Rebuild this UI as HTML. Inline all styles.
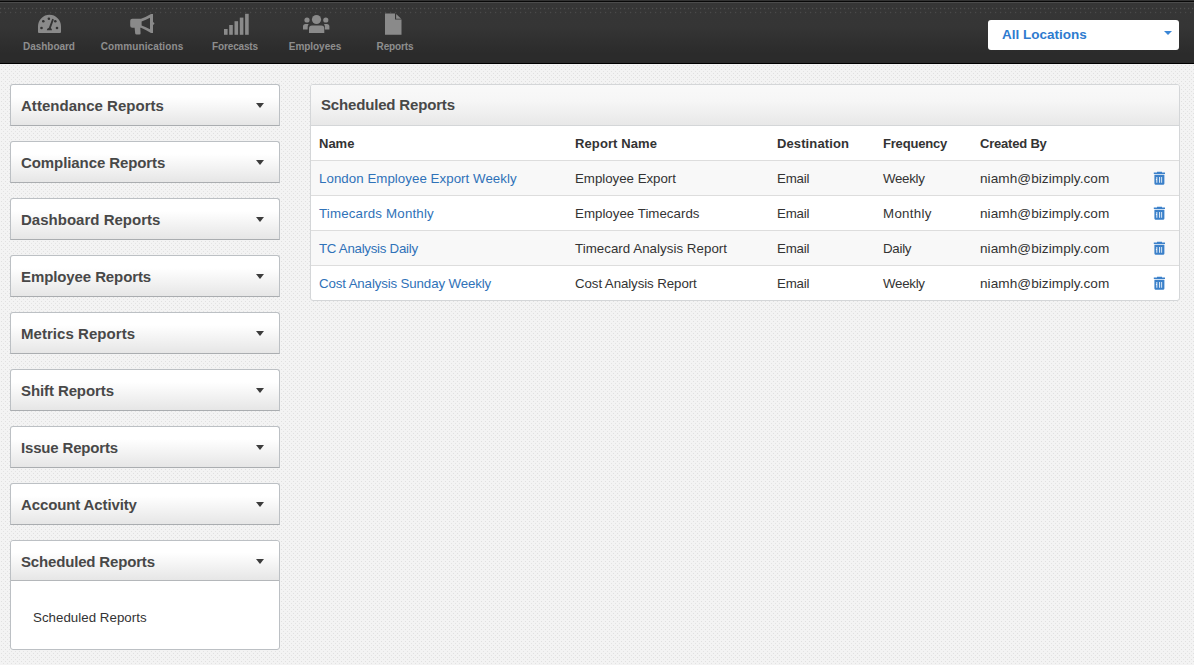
<!DOCTYPE html>
<html><head><meta charset="utf-8">
<style>
*{box-sizing:border-box;margin:0;padding:0}
html,body{width:1194px;height:665px;overflow:hidden}
body{position:relative;font-family:"Liberation Sans",sans-serif;background:#f3f3f3;color:#333}
#hdr{position:absolute;left:0;top:0;width:1194px;height:64px;background:linear-gradient(#363636 0%,#353535 42%,#2b2b2b 85%,#2b2b2b 100%);border-bottom:1px solid #000}
#hdr .l0{position:absolute;left:0;top:0;width:100%;height:1px;background:#333}
#hdr .l1{position:absolute;left:0;top:1px;width:100%;height:1px;background:#080808}
#hdr .l2{position:absolute;left:0;top:2px;width:100%;height:1px;background:#4c4c4c}
#hdr .d1{position:absolute;left:0;top:7px;width:100%;height:3px;background:radial-gradient(circle at 0.5px 1.5px,#4e4e4e 0.6px,rgba(78,78,78,0) 1.1px) 4px 0/4px 3px}
#hdr .d2{position:absolute;left:0;top:11px;width:100%;height:3px;background:radial-gradient(circle at 0.5px 1.5px,#4a4a4a 0.6px,rgba(74,74,74,0) 1.1px) 0 0/5px 3px}
.nav{position:absolute;top:0;height:63px;text-align:center;color:#8e8e8e;font-weight:700;font-size:10px}
.nav span{position:absolute;left:0;right:0;top:41px;white-space:nowrap}
.nav svg{position:absolute}
#loc{position:absolute;left:988px;top:20px;width:191px;height:30px;background:#fff;border-radius:3px}
#loc span{position:absolute;left:14px;top:7px;font-size:13.5px;font-weight:700;color:#2e7bcf}
#loc i{position:absolute;left:176px;top:11px;width:0;height:0;border-left:4px solid transparent;border-right:4px solid transparent;border-top:4px solid #3a86d6}
.sp{position:absolute;left:10px;width:270px;height:42px;border:1px solid #bcc0c4;border-bottom-color:#aaadb0;border-radius:3px 3px 0 0;background:linear-gradient(#fff 0%,#fff 30%,#e6e6e6 100%)}
.sp span{position:absolute;left:10px;top:11.5px;font-size:15px;font-weight:700;color:#484848;white-space:nowrap}
.sp i{position:absolute;left:245px;top:18px;width:0;height:0;border-left:4.7px solid transparent;border-right:4.7px solid transparent;border-top:5px solid #3c3c3c}
#open{position:absolute;left:10px;top:540px;width:270px;height:110px;border:1px solid #bcc0c4;border-radius:3px;background:#fff}
#open .h{position:absolute;left:0;top:0;width:268px;height:40px;border-bottom:1px solid #b4b7ba;background:linear-gradient(#fff 0%,#fff 30%,#e6e6e6 100%);border-radius:3px 3px 0 0}
#open .h span{position:absolute;left:10px;top:11.5px;font-size:15px;font-weight:700;color:#484848;white-space:nowrap}
#open .h i{position:absolute;left:245px;top:18px;width:0;height:0;border-left:4.7px solid transparent;border-right:4.7px solid transparent;border-top:5px solid #3c3c3c}
#open .b{position:absolute;left:22px;top:69px;font-size:13.3px;color:#333;white-space:nowrap}
#main{position:absolute;left:310px;top:84px;width:870px;height:217px;border:1px solid #d4d6d8;border-radius:3px;background:#fff;overflow:hidden}
#main .h{position:absolute;left:0;top:0;width:868px;height:41px;border-bottom:1px solid #d4d6d8;background:linear-gradient(#f9f9f9 0%,#f6f6f6 40%,#e8e8e8 100%)}
#main .h span{position:absolute;left:10px;top:11px;font-size:15px;font-weight:700;color:#484848;white-space:nowrap}
.row{position:absolute;left:0;width:868px;height:35px;border-top:1px solid #ddd}
.row.g{background:#f8f8f8}
.row span{position:absolute;top:10px;font-size:13.3px;white-space:nowrap;color:#333}
.row.th span{font-weight:700;font-size:13px;color:#333}
.row span.a{color:#2f72b8}
.tr{position:absolute;left:842px;top:10px}
</style></head>
<body>
<svg width="1194" height="665" style="position:absolute;left:0;top:0"><defs><pattern id="tex" width="4" height="4" patternUnits="userSpaceOnUse"><rect x="1" y="1" width="1" height="1" fill="#e0e0e0"/><rect x="3" y="3" width="1" height="1" fill="#e3e3e3"/></pattern></defs><rect width="1194" height="665" fill="url(#tex)"/></svg>
<div id="hdr"><div class="l0"></div><div class="l1"></div><div class="l2"></div><div class="d1"></div><div class="d2"></div>
<div class="nav" style="left:14px;width:70px"><span style="letter-spacing:-0.037px">Dashboard</span></div>
<div class="nav" style="left:97px;width:90px"><span style="letter-spacing:0.115px">Communications</span></div>
<div class="nav" style="left:200px;width:70px"><span style="letter-spacing:-0.163px">Forecasts</span></div>
<div class="nav" style="left:280px;width:70px"><span style="letter-spacing:-0.05px">Employees</span></div>
<div class="nav" style="left:360px;width:70px"><span style="letter-spacing:-0.133px">Reports</span></div>
<svg id="icons" width="1194" height="64" style="position:absolute;left:0;top:0">
<g fill="#8a8a8a">
<path d="M38,33 V26.3 A11.5,11.5 0 0 1 61,26.3 V32 Q61,33 60,33 H39 Q38,33 38,32 Z"/>
<path fill-rule="evenodd" d="M132.2,18.8 H141 Q146,17 151,14 H153 V33 H151 Q146,30 141,27.8 H140.3 L140.6,33.2 Q140.7,34.4 139.5,34.4 H136.4 Q135.4,34.4 135.2,33.4 L134.6,27.8 H132.2 Q130.2,27.8 130.2,25.8 V20.8 Q130.2,18.8 132.2,18.8 Z M141.6,21.4 Q146,19.8 150,17.8 V29.2 Q146,27.2 141.6,25.6 Z"/>
<circle cx="153" cy="23.5" r="1.3"/>
<rect x="224" y="29" width="3.6" height="5.8"/>
<rect x="229.2" y="25" width="3.6" height="9.8"/>
<rect x="234.5" y="21.2" width="3.6" height="13.6"/>
<rect x="239.8" y="17.6" width="3.6" height="17.2"/>
<rect x="245.1" y="13.8" width="3.6" height="21"/>
<circle cx="316.5" cy="19.5" r="4.6"/>
<path d="M309,33 V28.6 Q309,25.6 312,25.6 H321.3 Q324.3,25.6 324.3,28.6 V33 Z"/>
<circle cx="307" cy="20" r="2.6"/>
<circle cx="325.8" cy="20" r="2.6"/>
<path d="M303,29.4 V26.6 Q303,24.1 305.5,24.1 H308.6 Q307.4,25.4 307.6,29.4 Z"/>
<path d="M329.4,29.4 V26.6 Q329.4,24.1 326.9,24.1 H324 Q325.2,25.4 325,29.4 Z"/>
<path d="M385,13.6 H395 V19.6 H401.5 V34.8 H385 Z"/>
<path d="M396.1,14 L401.2,18.8 H396.1 Z"/>
</g>
<g fill="#333">
<circle cx="48.9" cy="18.8" r="1.3"/>
<circle cx="43.3" cy="21.3" r="1.3"/>
<circle cx="55.3" cy="21.3" r="1.3"/>
<circle cx="41.5" cy="28" r="1.3"/>
<circle cx="57" cy="28" r="1.3"/>
<path d="M52.2,18.8 L53.9,19.5 L50.8,27.9 Q52,28.6 52,30.2 H46.8 Q46.8,28.2 48.9,27.7 Z"/>
</g>
</svg>
<div id="loc"><span style="letter-spacing:0.008px">All Locations</span><i></i></div>
</div>

<div class="sp" style="top:84px"><span style="letter-spacing:0.024px">Attendance Reports</span><i></i></div>
<div class="sp" style="top:141px"><span style="letter-spacing:-0.088px">Compliance Reports</span><i></i></div>
<div class="sp" style="top:198px"><span style="letter-spacing:0.013px">Dashboard Reports</span><i></i></div>
<div class="sp" style="top:255px"><span style="letter-spacing:-0.1px">Employee Reports</span><i></i></div>
<div class="sp" style="top:312px"><span style="letter-spacing:0.05px">Metrics Reports</span><i></i></div>
<div class="sp" style="top:369px"><span style="letter-spacing:-0.1px">Shift Reports</span><i></i></div>
<div class="sp" style="top:426px"><span style="letter-spacing:-0.175px">Issue Reports</span><i></i></div>
<div class="sp" style="top:483px"><span style="letter-spacing:-0.127px">Account Activity</span><i></i></div>
<div id="open"><div class="h"><span style="letter-spacing:-0.169px">Scheduled Reports</span><i></i></div><div class="b" style="letter-spacing:0.031px">Scheduled Reports</div></div>

<div id="main">
<div class="h"><span style="letter-spacing:-0.169px">Scheduled Reports</span></div>
<div class="row th" style="top:41px;border-top:none"><span style="letter-spacing:0.0px;left:8px">Name</span><span style="letter-spacing:0.11px;left:264px">Report Name</span><span style="letter-spacing:0.11px;left:466px">Destination</span><span style="letter-spacing:-0.188px;left:572px">Frequency</span><span style="letter-spacing:-0.2px;left:669px">Created By</span></div>
<div class="row g" style="top:75px"><span class="a" style="letter-spacing:0.046px;left:8px">London Employee Export Weekly</span><span style="letter-spacing:-0.021px;left:264px">Employee Export</span><span style="letter-spacing:-0.225px;left:466px">Email</span><span style="letter-spacing:-0.3px;left:572px">Weekly</span><span style="letter-spacing:0.053px;left:669px;font-size:13.6px">niamh@bizimply.com</span><svg class="tr" width="14" height="15" viewBox="0 0 14 15"><path fill="#3b80c9" d="M0.8,1.5 H4 V0.8 H9 V1.5 H12 V2.9 H0.8 Z M1.4,3.8 H11.4 V12.6 Q11.4,13.7 10.4,13.7 H2.4 Q1.4,13.7 1.4,12.6 Z"/><path fill="#fff" d="M3.4,5.9 H4.3 V11.7 H3.4 Z M2.9,8.3 H3.5 V9 H2.9 Z M6.2,5.9 H7.1 V11.7 H6.2 Z M8.3,5.9 H9.1 V11.7 H8.3 Z"/></svg></div>
<div class="row" style="top:110px"><span class="a" style="letter-spacing:0.181px;left:8px">Timecards Monthly</span><span style="letter-spacing:0.018px;left:264px">Employee Timecards</span><span style="letter-spacing:-0.225px;left:466px">Email</span><span style="letter-spacing:0.317px;left:572px">Monthly</span><span style="letter-spacing:0.053px;left:669px;font-size:13.6px">niamh@bizimply.com</span><svg class="tr" width="14" height="15" viewBox="0 0 14 15"><path fill="#3b80c9" d="M0.8,1.5 H4 V0.8 H9 V1.5 H12 V2.9 H0.8 Z M1.4,3.8 H11.4 V12.6 Q11.4,13.7 10.4,13.7 H2.4 Q1.4,13.7 1.4,12.6 Z"/><path fill="#fff" d="M3.4,5.9 H4.3 V11.7 H3.4 Z M2.9,8.3 H3.5 V9 H2.9 Z M6.2,5.9 H7.1 V11.7 H6.2 Z M8.3,5.9 H9.1 V11.7 H8.3 Z"/></svg></div>
<div class="row g" style="top:145px"><span class="a" style="letter-spacing:-0.275px;left:8px">TC Analysis Daily</span><span style="letter-spacing:0.043px;left:264px">Timecard Analysis Report</span><span style="letter-spacing:-0.225px;left:466px">Email</span><span style="letter-spacing:-0.275px;left:572px">Daily</span><span style="letter-spacing:0.053px;left:669px;font-size:13.6px">niamh@bizimply.com</span><svg class="tr" width="14" height="15" viewBox="0 0 14 15"><path fill="#3b80c9" d="M0.8,1.5 H4 V0.8 H9 V1.5 H12 V2.9 H0.8 Z M1.4,3.8 H11.4 V12.6 Q11.4,13.7 10.4,13.7 H2.4 Q1.4,13.7 1.4,12.6 Z"/><path fill="#fff" d="M3.4,5.9 H4.3 V11.7 H3.4 Z M2.9,8.3 H3.5 V9 H2.9 Z M6.2,5.9 H7.1 V11.7 H6.2 Z M8.3,5.9 H9.1 V11.7 H8.3 Z"/></svg></div>
<div class="row" style="top:180px"><span class="a" style="letter-spacing:-0.135px;left:8px">Cost Analysis Sunday Weekly</span><span style="letter-spacing:-0.089px;left:264px">Cost Analysis Report</span><span style="letter-spacing:-0.225px;left:466px">Email</span><span style="letter-spacing:-0.28px;left:572px">Weekly</span><span style="letter-spacing:0.053px;left:669px;font-size:13.6px">niamh@bizimply.com</span><svg class="tr" width="14" height="15" viewBox="0 0 14 15"><path fill="#3b80c9" d="M0.8,1.5 H4 V0.8 H9 V1.5 H12 V2.9 H0.8 Z M1.4,3.8 H11.4 V12.6 Q11.4,13.7 10.4,13.7 H2.4 Q1.4,13.7 1.4,12.6 Z"/><path fill="#fff" d="M3.4,5.9 H4.3 V11.7 H3.4 Z M2.9,8.3 H3.5 V9 H2.9 Z M6.2,5.9 H7.1 V11.7 H6.2 Z M8.3,5.9 H9.1 V11.7 H8.3 Z"/></svg></div>
</div>
</body></html>
